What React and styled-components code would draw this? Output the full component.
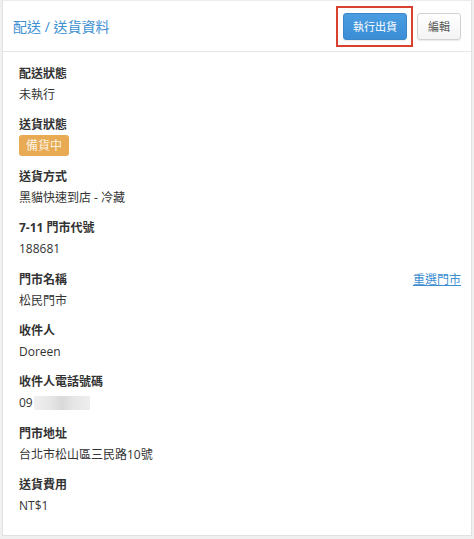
import React from "react";
import styled, { createGlobalStyle } from "styled-components";

const GlobalStyle = createGlobalStyle`
  html, body {
    margin: 0;
    padding: 0;
    background: #f0f0f0;
  }
  body {
    font-family: "Open Sans", "Noto Sans CJK TC", sans-serif;
    color: #333;
  }
`;

const Panel = styled.div`
  width: 470px;
  height: 536px;
  margin-left: 2px;
  background: #fff;
  border: 1px solid #e1e1e1;
  border-top-color: #ececec;
  box-sizing: border-box;
`;

const Header = styled.div`
  display: flex;
  align-items: center;
  justify-content: space-between;
  height: 51px;
  padding: 0 10px 0 10px;
  border-bottom: 1px solid #e6e6e6;
  box-sizing: border-box;
`;

const Title = styled.h3`
  margin: 0;
  font-size: 14px;
  font-weight: 400;
  color: #3d8fd1;
`;

const Actions = styled.div`
  display: flex;
  align-items: center;
  gap: 4px;
`;

const Highlight = styled.div`
  border: 2px solid #d9412f;
  padding: 5px 4px 5px 5px;
`;

const Button = styled.button`
  display: block;
  height: 27px;
  padding: 0 ${(p) => (p.$primary ? "9px" : "10px")};
  font-family: "Open Sans", "Noto Sans CJK TC", sans-serif;
  font-size: 11px;
  border-radius: 3px;
  cursor: pointer;
  border: 1px solid ${(p) => (p.$primary ? "#3a86c8" : "#d2d2d2")};
  background: ${(p) =>
    p.$primary
      ? "linear-gradient(#4a9de0, #3b8ed6)"
      : "linear-gradient(#fff, #f3f3f3)"};
  color: ${(p) => (p.$primary ? "#fff" : "#555")};
  box-shadow: 0 1px 1px rgba(0, 0, 0, 0.08);
`;

const Body = styled.div`
  padding: 13px 10px 0 16px;
`;

const Field = styled.div`
  display: flex;
  justify-content: space-between;
  align-items: flex-start;
  height: 51.4px;
`;

const Label = styled.div`
  font-size: 12px;
  font-weight: 700;
  color: #333;
  line-height: 17px;
`;

const Value = styled.div`
  font-size: 12px;
  color: #333;
  line-height: 17px;
  margin-top: 4px;
  display: flex;
  align-items: center;
`;

const Badge = styled.span`
  display: inline-block;
  background: #e8aa52;
  color: #fdf3e3;
  font-size: 12px;
  line-height: 21px;
  padding: 0 7px;
  border-radius: 3px;
  margin-top: 2px;
`;

const Link = styled.a`
  font-size: 12px;
  color: #3d8fd1;
  text-decoration: underline;
  line-height: 17px;
`;

const Blur = styled.span`
  display: inline-block;
  width: 56px;
  height: 14px;
  margin-left: 1px;
  background: linear-gradient(
    90deg,
    #f0f0f0 0%,
    #e6e6e6 30%,
    #d9d9d9 50%,
    #e6e6e6 70%,
    #eeeeee 100%
  );
`;

const fields = [
  { label: "配送狀態", value: "未執行" },
  { label: "送貨狀態", badge: "備貨中" },
  { label: "送貨方式", value: "黑貓快速到店 - 冷藏" },
  { label: "7-11 門市代號", value: "188681" },
  { label: "門市名稱", value: "松民門市", link: "重選門市" },
  { label: "收件人", value: "Doreen" },
  { label: "收件人電話號碼", value: "09", blur: true },
  { label: "門市地址", value: "台北市松山區三民路10號" },
  { label: "送貨費用", value: "NT$1" },
];

export default function App() {
  return (
    <>
      <GlobalStyle />
      <Panel>
        <Header>
          <Title>配送 / 送貨資料</Title>
          <Actions>
            <Highlight>
              <Button $primary>執行出貨</Button>
            </Highlight>
            <Button>編輯</Button>
          </Actions>
        </Header>
        <Body>
          {fields.map((f) => (
            <Field key={f.label}>
              <div>
                <Label>{f.label}</Label>
                {f.badge ? (
                  <Badge>{f.badge}</Badge>
                ) : (
                  <Value>
                    {f.value}
                    {f.blur && <Blur />}
                  </Value>
                )}
              </div>
              {f.link && <Link href="#">{f.link}</Link>}
            </Field>
          ))}
        </Body>
      </Panel>
    </>
  );
}
